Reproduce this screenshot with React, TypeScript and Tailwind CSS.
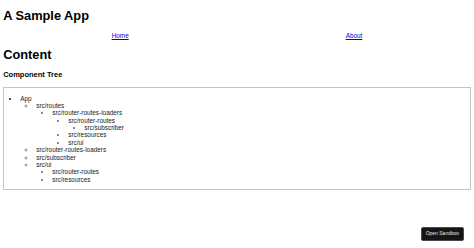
import React from "react";

type Node = { name: string; children?: Node[] };

const tree: Node = {
  name: "App",
  children: [
    {
      name: "src/routes",
      children: [
        {
          name: "src/router-routes-loaders",
          children: [
            { name: "src/router-routes", children: [{ name: "src/subscriber" }] },
            { name: "src/resources" },
            { name: "src/ui" },
          ],
        },
      ],
    },
    { name: "src/router-routes-loaders" },
    { name: "src/subscriber" },
    {
      name: "src/ui",
      children: [{ name: "src/router-routes" }, { name: "src/resources" }],
    },
  ],
};

// disc at top, circle on the second level, square below
const listStyles = [
  "list-disc",
  "list-[circle] marker:text-[#8a8a8a]",
  "list-[square]",
];

const TreeList = ({ nodes, depth }: { nodes: Node[]; depth: number }) => (
  <ul className={`${listStyles[Math.min(depth, 2)]} pl-[16px]`}>
    {nodes.map((node, i) => (
      <li key={i}>
        {node.name}
        {node.children && <TreeList nodes={node.children} depth={depth + 1} />}
      </li>
    ))}
  </ul>
);

export default function App() {
  return (
    <div className="min-h-[248px] bg-white px-[3.2px] pt-[8.6px] text-black font-['Liberation_Sans',Arial,sans-serif]">
      <h1 className="text-[12.8px] leading-[1.15] font-bold">A Sample App</h1>

      <nav className="mt-[8.6px] flex justify-around text-[6.4px] leading-[1.15]">
        <a href="#" className="text-[#0000ee] underline">
          Home
        </a>
        <a href="#" className="text-[#0000ee] underline">
          About
        </a>
      </nav>

      <h1 className="mt-[8.6px] text-[12.8px] leading-[1.15] font-bold">Content</h1>
      <h3 className="mt-[8.6px] text-[7.5px] leading-[1.15] font-bold">Component Tree</h3>

      <div className="mt-[7.5px] border border-[#c4c4c4] py-[6.4px] text-[6.4px] leading-[1.15] text-[#1a1a1a]">
        <TreeList nodes={[tree]} depth={0} />
      </div>

      <button className="fixed bottom-[7px] right-[10px] rounded-[2px] border border-[#4a4a4a] bg-[#151515] px-[4px] py-[3px] text-[5px] leading-[1.15] text-[#e8e8e8]">
        Open Sandbox
      </button>
    </div>
  );
}
